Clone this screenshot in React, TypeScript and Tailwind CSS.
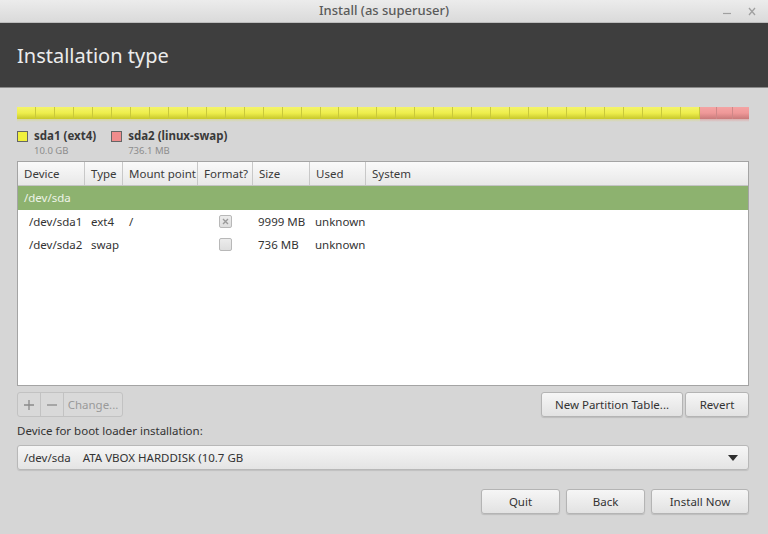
import React from "react";

const font = { fontFamily: '"Noto Sans", "Open Sans", sans-serif' };

function Btn({ children, className = "" }: { children: React.ReactNode; className?: string }) {
  return (
    <div
      className={
        "flex h-[25px] items-center justify-center rounded-[3px] border border-[#b4b4b4] bg-gradient-to-b from-[#f6f6f6] to-[#e2e2e2] text-[11.5px] text-[#333] shadow-[0_1px_1px_rgba(0,0,0,0.12)] " +
        className
      }
    >
      {children}
    </div>
  );
}

function Checkbox({ checked }: { checked?: boolean }) {
  return (
    <div className="flex h-[13px] w-[13px] items-center justify-center rounded-[2px] border border-[#b8b8b8] bg-gradient-to-b from-[#ececec] to-[#dedede]">
      {checked && (
        <svg width="7" height="7" viewBox="0 0 7 7">
          <path d="M1 1L6 6M6 1L1 6" stroke="#9a9a9a" strokeWidth="1.4" />
        </svg>
      )}
    </div>
  );
}

const cols = [
  { name: "Device", w: "w-[67px]" },
  { name: "Type", w: "w-[38px]" },
  { name: "Mount point", w: "w-[75px]" },
  { name: "Format?", w: "w-[55px]" },
  { name: "Size", w: "w-[57px]" },
  { name: "Used", w: "w-[56px]" },
];

export default function App() {
  const yellowSegs = Array.from({ length: 36 });
  const pinkSegs = Array.from({ length: 3 });
  return (
    <div className="flex h-[534px] w-[768px] flex-col overflow-hidden bg-[#d6d6d6]" style={font}>
      {/* Title bar */}
      <div className="relative flex h-[23px] items-center justify-center border-b border-[#bdbdbd] bg-gradient-to-b from-[#ececec] to-[#dadada]">
        <span className="text-[13px] font-medium text-[#5a5a5a]">Install (as superuser)</span>
        <div className="absolute right-[12px] top-0 flex h-full items-center gap-[17px] text-[#9a9a9a]">
          <svg width="8" height="8" viewBox="0 0 8 8">
            <path d="M0 6.5H8" stroke="#a0a0a0" strokeWidth="1.2" />
          </svg>
          <svg width="8" height="9" viewBox="0 0 8 9">
            <path d="M1 1L7 8M7 1L1 8" stroke="#a0a0a0" strokeWidth="1.3" />
          </svg>
        </div>
      </div>
      {/* Header */}
      <div className="flex h-[65px] items-center border-b border-[#8a8a8a] bg-[#3e3e3e] pl-[17px] pt-[2px]">
        <span className="text-[20px] text-[#ececec]">Installation type</span>
      </div>

      <div className="flex flex-1 flex-col pl-[17px] pr-[19px]">
        {/* Partition bar */}
        <div className="mt-[19px] flex h-[12px] w-full overflow-hidden">
          <div className="flex w-[683px]">
            {yellowSegs.map((_, i) => (
              <div
                key={i}
                className="h-full flex-1 border-r border-[#c9c93a] bg-gradient-to-b from-[#f4f46a] via-[#eeee4c] to-[#c8c82a]"
              />
            ))}
          </div>
          <div className="flex flex-1">
            {pinkSegs.map((_, i) => (
              <div
                key={i}
                className="h-full flex-1 border-r border-[#cf8888] bg-gradient-to-b from-[#f4a4a4] via-[#ef9898] to-[#c87a7a] last:border-r-0"
              />
            ))}
          </div>
        </div>
        <div className="flex h-[3px] w-full">
          <div className="w-[683px] bg-gradient-to-b from-[#d8d89a] to-[#d6d6d6]" />
          <div className="flex-1 bg-gradient-to-b from-[#dcb0b0] to-[#d6d6d6]" />
        </div>

        {/* Legend */}
        <div className="mt-[4px] flex h-[35px] gap-[15px]">
          <div className="flex">
            <div className="mt-[5px] h-[11px] w-[11px] border border-[#666] bg-[#f0f03c]" />
            <div className="ml-[6px] flex flex-col">
              <span className="text-[11.5px] font-bold leading-[19px] text-[#3a3a3a]">sda1 (ext4)</span>
              <span className="text-[9.5px] leading-[11px] text-[#8c8c8c]">10.0 GB</span>
            </div>
          </div>
          <div className="flex">
            <div className="mt-[5px] h-[11px] w-[11px] border border-[#666] bg-[#ef8c8c]" />
            <div className="ml-[6px] flex flex-col">
              <span className="text-[11.5px] font-bold leading-[19px] text-[#3a3a3a]">sda2 (linux-swap)</span>
              <span className="text-[9.5px] leading-[11px] text-[#8c8c8c]">736.1 MB</span>
            </div>
          </div>
        </div>

        {/* Table */}
        <div className="flex h-[225px] flex-col border border-[#a4a4a4] bg-white">
          <div className="flex h-[24px] border-b border-[#c4c4c4] bg-gradient-to-b from-[#fafafa] to-[#e8e8e8] text-[11.5px] text-[#3a3a3a]">
            {cols.map((c) => (
              <div key={c.name} className={c.w + " flex items-center whitespace-nowrap border-r border-[#c8c8c8] pl-[6px]"}>
                {c.name}
              </div>
            ))}
            <div className="flex flex-1 items-center pl-[6px]">System</div>
          </div>
          <div className="flex h-[24px] items-center bg-[#8db26f] pl-[6px] text-[11.5px] text-[#eef4e8]">/dev/sda</div>
          {[
            { d: "/dev/sda1", t: "ext4", m: "/", c: true, s: "9999 MB", u: "unknown" },
            { d: "/dev/sda2", t: "swap", m: "", c: false, s: "736 MB", u: "unknown" },
          ].map((r) => (
            <div key={r.d} className="flex h-[23px] items-center whitespace-nowrap text-[11.5px] text-[#333]">
              <div className="w-[67px] pl-[11px]">{r.d}</div>
              <div className="w-[38px] pl-[6px]">{r.t}</div>
              <div className="w-[75px] pl-[6px]">{r.m}</div>
              <div className="flex w-[55px] justify-center">
                <Checkbox checked={r.c} />
              </div>
              <div className="w-[57px] pl-[5px]">{r.s}</div>
              <div className="w-[56px] pl-[5px]">{r.u}</div>
            </div>
          ))}
        </div>

        {/* Buttons row */}
        <div className="mt-[6px] flex items-center justify-between">
          <div className="flex h-[25px] rounded-[3px] border border-[#c2c2c2] bg-[#d9d9d9] text-[11.5px] text-[#9a9a9a]">
            <div className="flex w-[23px] items-center justify-center border-r border-[#c2c2c2]">
              <svg width="10" height="10" viewBox="0 0 10 10">
                <path d="M5 0V10M0 5H10" stroke="#8a8a8a" strokeWidth="1.3" />
              </svg>
            </div>
            <div className="flex w-[23px] items-center justify-center border-r border-[#c2c2c2]">
              <svg width="10" height="10" viewBox="0 0 10 10">
                <path d="M0 5H10" stroke="#8a8a8a" strokeWidth="1.3" />
              </svg>
            </div>
            <div className="flex w-[58px] items-center justify-center">Change...</div>
          </div>
          <div className="flex gap-[2px]">
            <Btn className="w-[142px]">New Partition Table...</Btn>
            <Btn className="w-[64px]">Revert</Btn>
          </div>
        </div>

        <div className="mt-[6px] text-[11.5px] leading-[16px] text-[#333]">Device for boot loader installation:</div>

        <div className="mt-[6px] flex h-[25px] items-center justify-between rounded-[3px] border border-[#b8b8b8] bg-gradient-to-b from-[#f6f6f6] to-[#e4e4e4] pl-[6px] pr-[10px] text-[11.5px] text-[#333] shadow-[0_1px_1px_rgba(0,0,0,0.1)]">
          <span className="whitespace-pre">/dev/sda    ATA VBOX HARDDISK (10.7 GB</span>
          <svg width="10" height="6" viewBox="0 0 10 6">
            <path d="M0 0H10L5 6Z" fill="#2e2e2e" />
          </svg>
        </div>

        <div className="mt-[19px] flex justify-end gap-[6px]">
          <Btn className="w-[79px]">Quit</Btn>
          <Btn className="w-[79px]">Back</Btn>
          <Btn className="w-[98px] border-[#8fbf6f]">Install Now</Btn>
        </div>
      </div>
    </div>
  );
}
